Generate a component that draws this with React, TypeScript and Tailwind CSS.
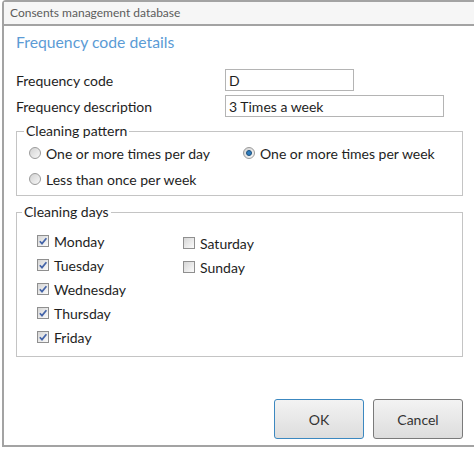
import React from 'react';

const FONT = { fontFamily: 'Lato, "Open Sans", sans-serif' };

function Radio({ checked, label }: { checked?: boolean; label: string }) {
  return (
    <label className="flex h-5 items-center gap-[5px]">
      <span className="flex h-3 w-3 items-center justify-center rounded-full border border-[#9a9a9a] bg-gradient-to-br from-[#d2d2d2] to-[#f8f8f8]">
        {checked && <span className="h-[6px] w-[6px] rounded-full border border-[#1d4f7a] bg-[#2f7dbf]" />}
      </span>
      <span>{label}</span>
    </label>
  );
}

function Check({ checked, label }: { checked?: boolean; label: string }) {
  return (
    <label className="flex h-6 items-center gap-[5px]">
      <span className="flex h-3 w-3 items-center justify-center border border-[#8f8f8f] bg-gradient-to-br from-[#d6d6d6] to-[#fbfbfb]">
        {checked && (
          <svg width="10" height="10" viewBox="0 0 10 10">
            <path d="M1.8 5.2 L4 7.6 L8.4 2.2" fill="none" stroke="#4464a8" strokeWidth="1.7" />
          </svg>
        )}
      </span>
      <span>{label}</span>
    </label>
  );
}

export default function App() {
  return (
    <div className="h-[451px] w-[474px] overflow-hidden bg-white text-[14px] text-[#1e1e1e]" style={FONT}>
      <div className="ml-[2px] rounded-tl-[4px] border-l-2 border-t-2 border-[#a3a3a3]">
        <div className="flex h-[22px] items-center bg-[#f6f6f6] pl-[6px] text-[12px] text-[#5c5c5c]">
          Consents management database
        </div>
        <div className="flex h-[423px] flex-col border-b-2 border-t-2 border-[#a3a3a3] pl-[12px] pr-[10px]">
          <div className="pt-[6px] text-[15.75px] leading-5 text-[#5b9bd5]">Frequency code details</div>

          <div className="mt-[17px] flex flex-col gap-1">
            <div className="flex h-[22px] items-center">
              <span className="w-[209px]">Frequency code</span>
              <div className="flex h-[22px] w-[129px] items-center border border-[#b4b4b4] px-[3px]">D</div>
            </div>
            <div className="flex h-[22px] items-center">
              <span className="w-[209px]">Frequency description</span>
              <div className="flex h-[22px] w-[219px] items-center border border-[#b4b4b4] px-[3px]">3 Times a week</div>
            </div>
          </div>

          <fieldset className="mt-[6px] w-[447px] border border-[#c4c4c4] pb-[6px]">
            <legend className="ml-[7px] px-[2px] leading-4">Cleaning pattern</legend>
            <div className="flex flex-col gap-[6px] pl-3 pt-1">
              <div className="flex">
                <div className="w-[214px]">
                  <Radio label="One or more times per day" />
                </div>
                <Radio checked label="One or more times per week" />
              </div>
              <Radio label="Less than once per week" />
            </div>
          </fieldset>

          <fieldset className="mt-2 w-[447px] border border-[#c4c4c4] pb-[7px]">
            <legend className="ml-[5px] px-[2px] leading-4">Cleaning days</legend>
            <div className="flex pl-5 pt-[9px]">
              <div className="flex w-[146px] flex-col">
                <Check checked label="Monday" />
                <Check checked label="Tuesday" />
                <Check checked label="Wednesday" />
                <Check checked label="Thursday" />
                <Check checked label="Friday" />
              </div>
              <div className="mt-[2px] flex flex-col">
                <Check label="Saturday" />
                <Check label="Sunday" />
              </div>
            </div>
          </fieldset>

          <div className="mt-[42px] flex w-[447px] justify-end gap-[9px] text-[14px]">
            <button className="h-10 w-[90px] rounded-[3px] border border-[#3c88c0] bg-gradient-to-b from-[#f3f3f3] to-[#dddddd] text-[#333]">
              OK
            </button>
            <button className="h-10 w-[90px] rounded-[3px] border border-[#7a7a7a] bg-gradient-to-b from-[#f3f3f3] to-[#dddddd] text-[#333]">
              Cancel
            </button>
          </div>
        </div>
      </div>
    </div>
  );
}
